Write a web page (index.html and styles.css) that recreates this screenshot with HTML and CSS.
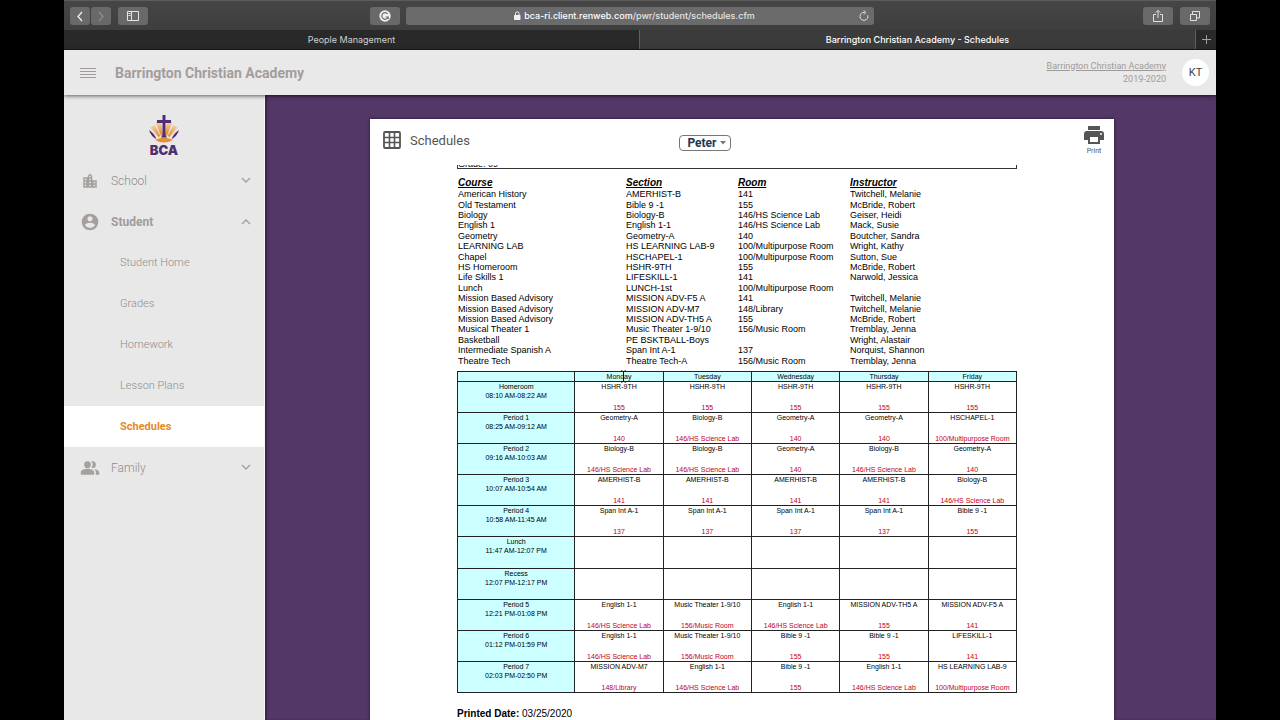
FILE: index.html
```
<!DOCTYPE html>
<html lang="en">
<head>
    <meta charset="UTF-8">
    <meta name="viewport" content="width=device-width, initial-scale=1.0">
    <title>Barrington Christian Academy - Schedules</title>
    <link rel="stylesheet" href="styles.css">
</head>
<body>
    <div id="browser">
        <div class="toolbar">
            <div class="tools">
                <div class="nav">
                    <button aria-label="Back"><svg width="20" height="18" viewBox="0 0 20 18"><path d="M12 5 8 9.500l4 4.500" stroke="#f0f0f0" stroke-width="1.300"/></svg></button>
                    <button aria-label="Forward"><svg width="20" height="18" viewBox="0 0 20 18"><path d="m8 5 4 4.500L8 14" stroke="#8c8c8c" stroke-width="1.300"/></svg></button>
                </div>
                <button class="wide" aria-label="Sidebar"><svg width="14" height="12" viewBox="0 0 14 12"><path d="M1.500 1.500h11v9h-11zM5.500 1.500v9M2.500 3.500h2M2.500 5.500h2" stroke="#e6e6e6"/></svg></button>
                <button class="wide end" aria-label="Grammar check"><svg width="12" height="12" viewBox="0 0 12 12"><circle cx="6" cy="6" r="5.700" fill="#efefef"/><path d="M8.700 4A3.300 3.300 0 1 0 9.200 7H6.700M9.200 7v2" stroke="#6c6c6c" stroke-width="1.200"/></svg></button>
            </div>
            <div class="address">
                <div class="url">
                    <svg width="8" height="10" viewBox="0 0 8 10"><rect x="1" y="4" width="6.500" height="5" rx=".8" fill="#f0f0f0"/><path d="M2.500 4.500V2.600a1.700 1.700 0 0 1 3.500 0v1.900" stroke="#f0f0f0"/></svg>
                    <span>bca-ri.client.renweb.com<span class="path">/pwr/student/schedules.cfm</span></span>
                </div>
                <button class="reload" aria-label="Reload"><svg width="12" height="12" viewBox="0 0 12 12"><path d="M6.500 2.400A4 4 0 1 0 9.800 5.200M5.600.4l2.300 2-2.300 2.200" stroke="#e0e0e0"/></svg></button>
            </div>
            <div class="tools">
                <button class="wide end" aria-label="Share"><svg width="12" height="14" viewBox="0 0 12 14"><path d="M4 5.500H1.500v7h9v-7H8M6 9V1.500M3.800 3.600 6 1.400l2.200 2.200" stroke="#e0e0e0"/></svg></button>
                <button class="wide" aria-label="Show tabs"><svg width="12" height="12" viewBox="0 0 12 12"><path d="M1.500 4.500h6v6h-6zM3.500 4.500v-3h7v6.500H7.500" stroke="#e0e0e0"/></svg></button>
            </div>
        </div>
        <div class="tabs">
            <a href="#" class="tab">People Management</a>
            <a href="#" class="tab active">Barrington Christian Academy - Schedules</a>
            <button class="plus" aria-label="New tab"><svg width="11" height="11" viewBox="0 0 11 11"><path d="M5.500 1v9M1 5.500h9" stroke="#a0a0a0"/></svg></button>
        </div>

        <header>
            <button class="menu" aria-label="Menu"><svg width="16" height="12" viewBox="0 0 16 12"><path d="M0 1.500h16M0 4.500h16M0 7.500h16M0 10.500h16" stroke="#a09b99" stroke-width="1.200"/></svg></button>
            <h1>Barrington Christian Academy</h1>
            <div class="year">
                <a href="#">Barrington Christian Academy</a>
                <span>2019-2020</span>
            </div>
            <div class="avatar">KT</div>
        </header>

        <div class="page">
            <nav class="sidebar">
                <div class="logo">
                    <svg width="32" height="28" viewBox="0 0 32 28">
                        <defs>
                            <radialGradient id="rays" gradientUnits="userSpaceOnUse" cx="16" cy="25" r="21">
                                <stop offset=".35" stop-color="#e8923a"/>
                                <stop offset="1" stop-color="#f5dcba"/>
                            </radialGradient>
                        </defs>
                        <path d="M10.500 22 2.500 12.500l4-2.500 6 11zM13 21 7.500 7.500l5-4L15 20zM19 21l5.500-13.500-5-4L17 20zM21.500 22l8-9.500-4-2.500-6 11z" fill="url(#rays)"/>
                        <path d="M7 25q9-5 18 0-9 5-18 0z" fill="#e58e35"/>
                        <path d="M1 15q5 3 7.500 9Q3 21.500 1 15zM31 15q-5 3-7.500 9Q29 21.500 31 15z" fill="#4f2f73"/>
                        <path d="M14.500 0h3v5H23v3h-5.500v12l1.500 2.500h-6l1.500-2.500V8H9V5h5.500z" fill="#4f2f73"/>
                    </svg>
                    <span>BCA</span>
                </div>
                <a href="#" class="item">
                    <svg width="18" height="18" viewBox="0 0 24 24"><path d="M15 11V5l-3-3-3 3v2H3v14h18V11zm-8 8H5v-2h2zm0-4H5v-2h2zm0-4H5V9h2zm6 8h-2v-2h2zm0-4h-2v-2h2zm0-4h-2V9h2zm0-4h-2V5h2zm6 12h-2v-2h2zm0-4h-2v-2h2z" fill="#a5a09e"/></svg>
                    <span>School</span>
                    <svg class="arrow" width="10" height="7" viewBox="0 0 10 7"><path d="m1 1 4 4 4-4" stroke="#a5a09e" stroke-width="1.400"/></svg>
                </a>
                <a href="#" class="item open">
                    <svg width="20" height="20" viewBox="0 0 24 24"><path d="M12 2a10 10 0 1 0 0 20 10 10 0 0 0 0-20zm0 3a3 3 0 1 1 0 6 3 3 0 0 1 0-6zm0 14.200a7.200 7.200 0 0 1-6-3.220c.03-1.990 4-3.080 6-3.080s5.970 1.090 6 3.080a7.200 7.200 0 0 1-6 3.220z" fill="#a5a09e"/></svg>
                    <span>Student</span>
                    <svg class="arrow" width="10" height="7" viewBox="0 0 10 7"><path d="m1 6 4-4 4 4" stroke="#a5a09e" stroke-width="1.400"/></svg>
                </a>
                <a href="#" class="item sub">Student Home</a>
                <a href="#" class="item sub">Grades</a>
                <a href="#" class="item sub">Homework</a>
                <a href="#" class="item sub">Lesson Plans</a>
                <a href="#" class="item sub current">Schedules</a>
                <a href="#" class="item">
                    <svg width="20" height="20" viewBox="0 0 24 24"><path d="M16.670 13.130C18.040 14.060 19 15.320 19 17v3h4v-3c0-2.180-3.570-3.470-6.330-3.870zM15 12a4 4 0 1 0 0-8c-.47 0-.91.1-1.330.24a5.980 5.980 0 0 1 0 7.520c.42.14.86.24 1.330.24zM9 12a4 4 0 1 0 0-8 4 4 0 0 0 0 8zm0 1c-2.670 0-8 1.340-8 4v3h16v-3c0-2.660-5.330-4-8-4z" fill="#a5a09e"/></svg>
                    <span>Family</span>
                    <svg class="arrow" width="10" height="7" viewBox="0 0 10 7"><path d="m1 1 4 4 4-4" stroke="#a5a09e" stroke-width="1.400"/></svg>
                </a>
            </nav>

            <main>
                <div class="card">
                    <div class="card-head">
                        <h2>
                            <svg width="18" height="18" viewBox="0 0 18 18"><rect x="1" y="1" width="16" height="16" rx="1" stroke="#555" stroke-width="1.800"/><path d="M6.500 1v16M11.500 1v16M1 6.500h16M1 11.500h16" stroke="#555" stroke-width="1.600"/></svg>
                            Schedules
                        </h2>
                        <div class="picker">
                            <select aria-label="Student">
                                <option>Peter</option>
                            </select>
                            <svg width="6" height="4" viewBox="0 0 6 4"><path d="M0 0h6L3 3.500z" fill="#777"/></svg>
                        </div>
                        <button class="print">
                            <svg width="24" height="24" viewBox="0 0 24 24"><path d="M19 8H5a3 3 0 0 0-3 3v6h4v4h12v-4h4v-6a3 3 0 0 0-3-3zm-3 11H8v-5h8zm3-7a1 1 0 1 1 0-2 1 1 0 0 1 0 2zm-1-9H6v4h12z" fill="#555"/></svg>
                            Print
                        </button>
                    </div>

                    <div class="sheet">
                        <div class="student-box"><span>Grade: 09</span></div>

                        <table class="courses">
                            <thead>
                                <tr><th>Course</th><th>Section</th><th>Room</th><th>Instructor</th></tr>
                            </thead>
                            <tbody>
                                <tr><td>American History</td><td>AMERHIST-B</td><td>141</td><td>Twitchell, Melanie</td></tr>
                                <tr><td>Old Testament</td><td>Bible 9 -1</td><td>155</td><td>McBride, Robert</td></tr>
                                <tr><td>Biology</td><td>Biology-B</td><td>146/HS Science Lab</td><td>Geiser, Heidi</td></tr>
                                <tr><td>English 1</td><td>English 1-1</td><td>146/HS Science Lab</td><td>Mack, Susie</td></tr>
                                <tr><td>Geometry</td><td>Geometry-A</td><td>140</td><td>Boutcher, Sandra</td></tr>
                                <tr><td>LEARNING LAB</td><td>HS LEARNING LAB-9</td><td>100/Multipurpose Room</td><td>Wright, Kathy</td></tr>
                                <tr><td>Chapel</td><td>HSCHAPEL-1</td><td>100/Multipurpose Room</td><td>Sutton, Sue</td></tr>
                                <tr><td>HS Homeroom</td><td>HSHR-9TH</td><td>155</td><td>McBride, Robert</td></tr>
                                <tr><td>Life Skills 1</td><td>LIFESKILL-1</td><td>141</td><td>Narwold, Jessica</td></tr>
                                <tr><td>Lunch</td><td>LUNCH-1st</td><td>100/Multipurpose Room</td><td></td></tr>
                                <tr><td>Mission Based Advisory</td><td>MISSION ADV-F5 A</td><td>141</td><td>Twitchell, Melanie</td></tr>
                                <tr><td>Mission Based Advisory</td><td>MISSION ADV-M7</td><td>148/Library</td><td>Twitchell, Melanie</td></tr>
                                <tr><td>Mission Based Advisory</td><td>MISSION ADV-TH5 A</td><td>155</td><td>McBride, Robert</td></tr>
                                <tr><td>Musical Theater 1</td><td>Music Theater 1-9/10</td><td>156/Music Room</td><td>Tremblay, Jenna</td></tr>
                                <tr><td>Basketball</td><td>PE BSKTBALL-Boys</td><td></td><td>Wright, Alastair</td></tr>
                                <tr><td>Intermediate Spanish A</td><td>Span Int A-1</td><td>137</td><td>Norquist, Shannon</td></tr>
                                <tr><td>Theatre Tech</td><td>Theatre Tech-A</td><td>156/Music Room</td><td>Tremblay, Jenna</td></tr>
                            </tbody>
                        </table>

                        <table class="week">
                            <thead>
                                <tr>
                                    <th class="period"></th>
                                    <th>Monday<svg class="caret" width="7" height="13" viewBox="0 0 7 13"><path d="M1 .8q2 0 2.500 1.200Q4 .8 6 .8M3.500 2v9M1 12.200q2 0 2.500-1.200.5 1.200 2.500 1.200" stroke="#111"/></svg></th>
                                    <th>Tuesday</th>
                                    <th>Wednesday</th>
                                    <th>Thursday</th>
                                    <th>Friday</th>
                                </tr>
                            </thead>
                            <tbody>
                                <tr>
                                    <th>Homeroom<br>08:10 AM-08:22 AM</th>
                                    <td>HSHR-9TH<p>155</p></td>
                                    <td>HSHR-9TH<p>155</p></td>
                                    <td>HSHR-9TH<p>155</p></td>
                                    <td>HSHR-9TH<p>155</p></td>
                                    <td>HSHR-9TH<p>155</p></td>
                                </tr>
                                <tr>
                                    <th>Period 1<br>08:25 AM-09:12 AM</th>
                                    <td>Geometry-A<p>140</p></td>
                                    <td>Biology-B<p>146/HS Science Lab</p></td>
                                    <td>Geometry-A<p>140</p></td>
                                    <td>Geometry-A<p>140</p></td>
                                    <td>HSCHAPEL-1<p>100/Multipurpose Room</p></td>
                                </tr>
                                <tr>
                                    <th>Period 2<br>09:16 AM-10:03 AM</th>
                                    <td>Biology-B<p>146/HS Science Lab</p></td>
                                    <td>Biology-B<p>146/HS Science Lab</p></td>
                                    <td>Geometry-A<p>140</p></td>
                                    <td>Biology-B<p>146/HS Science Lab</p></td>
                                    <td>Geometry-A<p>140</p></td>
                                </tr>
                                <tr>
                                    <th>Period 3<br>10:07 AM-10:54 AM</th>
                                    <td>AMERHIST-B<p>141</p></td>
                                    <td>AMERHIST-B<p>141</p></td>
                                    <td>AMERHIST-B<p>141</p></td>
                                    <td>AMERHIST-B<p>141</p></td>
                                    <td>Biology-B<p>146/HS Science Lab</p></td>
                                </tr>
                                <tr>
                                    <th>Period 4<br>10:58 AM-11:45 AM</th>
                                    <td>Span Int A-1<p>137</p></td>
                                    <td>Span Int A-1<p>137</p></td>
                                    <td>Span Int A-1<p>137</p></td>
                                    <td>Span Int A-1<p>137</p></td>
                                    <td>Bible 9 -1<p>155</p></td>
                                </tr>
                                <tr>
                                    <th>Lunch<br>11:47 AM-12:07 PM</th>
                                    <td></td><td></td><td></td><td></td><td></td>
                                </tr>
                                <tr>
                                    <th>Recess<br>12:07 PM-12:17 PM</th>
                                    <td></td><td></td><td></td><td></td><td></td>
                                </tr>
                                <tr>
                                    <th>Period 5<br>12:21 PM-01:08 PM</th>
                                    <td>English 1-1<p>146/HS Science Lab</p></td>
                                    <td>Music Theater 1-9/10<p>156/Music Room</p></td>
                                    <td>English 1-1<p>146/HS Science Lab</p></td>
                                    <td>MISSION ADV-TH5 A<p>155</p></td>
                                    <td>MISSION ADV-F5 A<p>141</p></td>
                                </tr>
                                <tr>
                                    <th>Period 6<br>01:12 PM-01:59 PM</th>
                                    <td>English 1-1<p>146/HS Science Lab</p></td>
                                    <td>Music Theater 1-9/10<p>156/Music Room</p></td>
                                    <td>Bible 9 -1<p>155</p></td>
                                    <td>Bible 9 -1<p>155</p></td>
                                    <td>LIFESKILL-1<p>141</p></td>
                                </tr>
                                <tr>
                                    <th>Period 7<br>02:03 PM-02:50 PM</th>
                                    <td>MISSION ADV-M7<p>148/Library</p></td>
                                    <td>English 1-1<p>146/HS Science Lab</p></td>
                                    <td>Bible 9 -1<p>155</p></td>
                                    <td>English 1-1<p>146/HS Science Lab</p></td>
                                    <td>HS LEARNING LAB-9<p>100/Multipurpose Room</p></td>
                                </tr>
                            </tbody>
                        </table>

                        <div class="printed"><b>Printed Date:</b> 03/25/2020</div>
                    </div>
                </div>
            </main>
        </div>
    </div>
</body>
</html>
```
FILE: styles.css
```
* {
    box-sizing: border-box;
}
body {
    margin: 0;
    background-color: #000;
    font-family: Roboto, sans-serif;
    height: 100vh;
    overflow: hidden;
}
svg {
    display: block;
    fill: none;
    flex-shrink: 0;
}
button {
    border: none;
    padding: 0;
    background: none;
    font-family: inherit;
    display: flex;
    align-items: center;
    justify-content: center;
    cursor: pointer;
}
a {
    color: inherit;
    text-decoration: none;
}
#browser {
    height: 100%;
    margin: 0 64px;
    display: flex;
    flex-direction: column;
}

/* browser bars */
.toolbar {
    display: grid;
    grid-template-columns: 1fr 41% 1fr;
    gap: 6px;
    align-items: center;
    height: 30px;
    padding: 0 6px;
    background: linear-gradient(#464646, #3e3e3e);
    border-top: 1px solid #5c5c5c;
    flex-shrink: 0;
}
.tools {
    display: flex;
    gap: 7px;
}
.tools button {
    height: 18px;
    border-radius: 3px;
    background-color: #696969;
}
.nav {
    display: flex;
    gap: 1px;
}
.tools .wide {
    width: 30px;
}
.end {
    margin-left: auto;
}
.address {
    display: flex;
    align-items: center;
    height: 18px;
    padding: 0 4px;
    border-radius: 3px;
    background-color: #6b6b6b;
}
.url {
    flex: 1;
    display: flex;
    align-items: center;
    justify-content: center;
    gap: 3px;
    font: 500 9px Inter, sans-serif;
    color: #fff;
}
.path {
    color: #e4e4e4;
}
.tabs {
    display: flex;
    height: 20px;
    background-color: #292929;
    border-bottom: 1px solid #1c1c1c;
    flex-shrink: 0;
}
.tab {
    width: 50%;
    display: flex;
    align-items: center;
    justify-content: center;
    font: 400 9px Inter, sans-serif;
    color: #d0d0d0;
    border-right: 1px solid #5e5e5e;
}
.active {
    flex: 1;
    font-weight: 500;
    color: #fff;
    background-color: #3b3b3b;
}
.plus {
    width: 20px;
}

/* app header */
header {
    display: flex;
    align-items: center;
    height: 45px;
    padding: 0 7px 0 16px;
    background-color: #e9e9e9;
    box-shadow: 0 1px 4px rgba(0, 0, 0, 0.6);
    position: relative;
    flex-shrink: 0;
    color: #a09b99;
}
h1 {
    margin: 0 0 0 19px;
    font-size: 14px;
    font-weight: 700;
    color: #a39d9b;
}
.year {
    display: flex;
    flex-direction: column;
    margin-left: auto;
    text-align: right;
    font-size: 9px;
    line-height: 13px;
}
.year a {
    text-decoration: underline;
}
.avatar {
    width: 27px;
    height: 27px;
    margin-left: 16px;
    border-radius: 50%;
    background-color: #fff;
    color: #444;
    font-size: 11px;
    line-height: 28px;
    text-align: center;
}
.page {
    flex: 1;
    display: flex;
    min-height: 0;
}

/* sidebar */
.sidebar {
    width: 201px;
    flex-shrink: 0;
    background-color: #e8e8e8;
    border-right: 1px solid #f6f6f6;
}
.logo {
    display: flex;
    flex-direction: column;
    align-items: center;
    height: 65px;
    padding-top: 20px;
    font: 900 13px/14px Inter, sans-serif;
    color: #4f2f73;
}
.item {
    display: flex;
    align-items: center;
    height: 41px;
    padding: 0 13px 0 16px;
    font-size: 12px;
    font-weight: 300;
    color: #918c8a;
}
.item span {
    flex: 1;
}
.item svg:first-child {
    width: 20px;
    margin-right: 11px;
}
.open {
    font-weight: 700;
    color: #a09b99;
}
.sub {
    padding-left: 56px;
    font-size: 11px;
}
.current {
    background-color: #fff;
    font-weight: 700;
    color: #e58a1f;
}

/* schedule card */
main {
    flex: 1;
    display: flex;
    padding: 24px 102px 0 105px;
    background-color: #533767;
    box-shadow: inset 2px 0 2px rgba(0, 0, 0, 0.3);
    min-width: 0;
}
.card {
    flex: 1;
    display: flex;
    flex-direction: column;
    background-color: #fff;
    box-shadow: 0 0 3px rgba(0, 0, 0, 0.6);
    min-width: 0;
}
.card-head {
    display: grid;
    grid-template-columns: 41% auto 1fr;
    height: 46px;
    padding: 0 8px 0 13px;
    flex-shrink: 0;
}
h2 {
    display: flex;
    align-items: center;
    gap: 9px;
    height: 18px;
    margin: 12px 0 0;
    font-size: 13px;
    font-weight: 400;
    color: #555;
}
.picker {
    display: flex;
    align-items: center;
    height: 16px;
    margin-top: 16px;
    padding: 0 4px 0 7px;
    gap: 3px;
    border: 1px solid #777;
    border-radius: 4px;
}
select {
    appearance: none;
    border: none;
    padding: 0;
    background: none;
    font: 700 12px/14px Roboto, sans-serif;
    color: #1d3850;
}
.print {
    flex-direction: column;
    justify-self: end;
    height: 40px;
    font-size: 7px;
    line-height: 8px;
    color: #555;
}
.sheet {
    flex: 1;
    overflow: hidden;
    padding: 0 97px 0 87px;
    font-family: "Liberation Sans", Arial, sans-serif;
    font-size: 9px;
    color: #000;
}
.student-box {
    display: flex;
    align-items: flex-end;
    height: 4px;
    overflow: hidden;
    border: 1px solid #333;
    border-top: none;
    line-height: 8px;
}
table {
    width: 100%;
    table-layout: fixed;
    border-collapse: collapse;
}
.courses {
    height: 189px;
    margin-top: 8px;
}
.courses th, .courses td {
    width: 20%;
    padding: 0 0 0 1px;
    text-align: left;
    line-height: 10px;
    white-space: nowrap;
}
.courses th:first-child {
    width: 30%;
}
.courses th:last-child {
    width: 30%;
}
.courses th {
    height: 12px;
    font-size: 10px;
    font-style: italic;
    text-decoration: underline;
}
.week {
    height: 322px;
    margin-top: 5px;
    font-size: 7px;
    line-height: 9px;
    text-align: center;
}
.week th, .week td {
    height: 31px;
    padding: 0;
    border: 1px solid #222;
    font-weight: 400;
    vertical-align: top;
}
.week th {
    position: relative;
    background-color: #ccffff;
}
.week thead th {
    height: 10px;
}
.week .period {
    width: 21%;
}
.week p {
    margin: 12px 0 0;
    color: #c00020;
}
.caret {
    position: absolute;
    top: -2px;
    left: 45px;
}
.printed {
    margin-top: 15px;
    font-size: 10px;
    line-height: 12px;
}
```
